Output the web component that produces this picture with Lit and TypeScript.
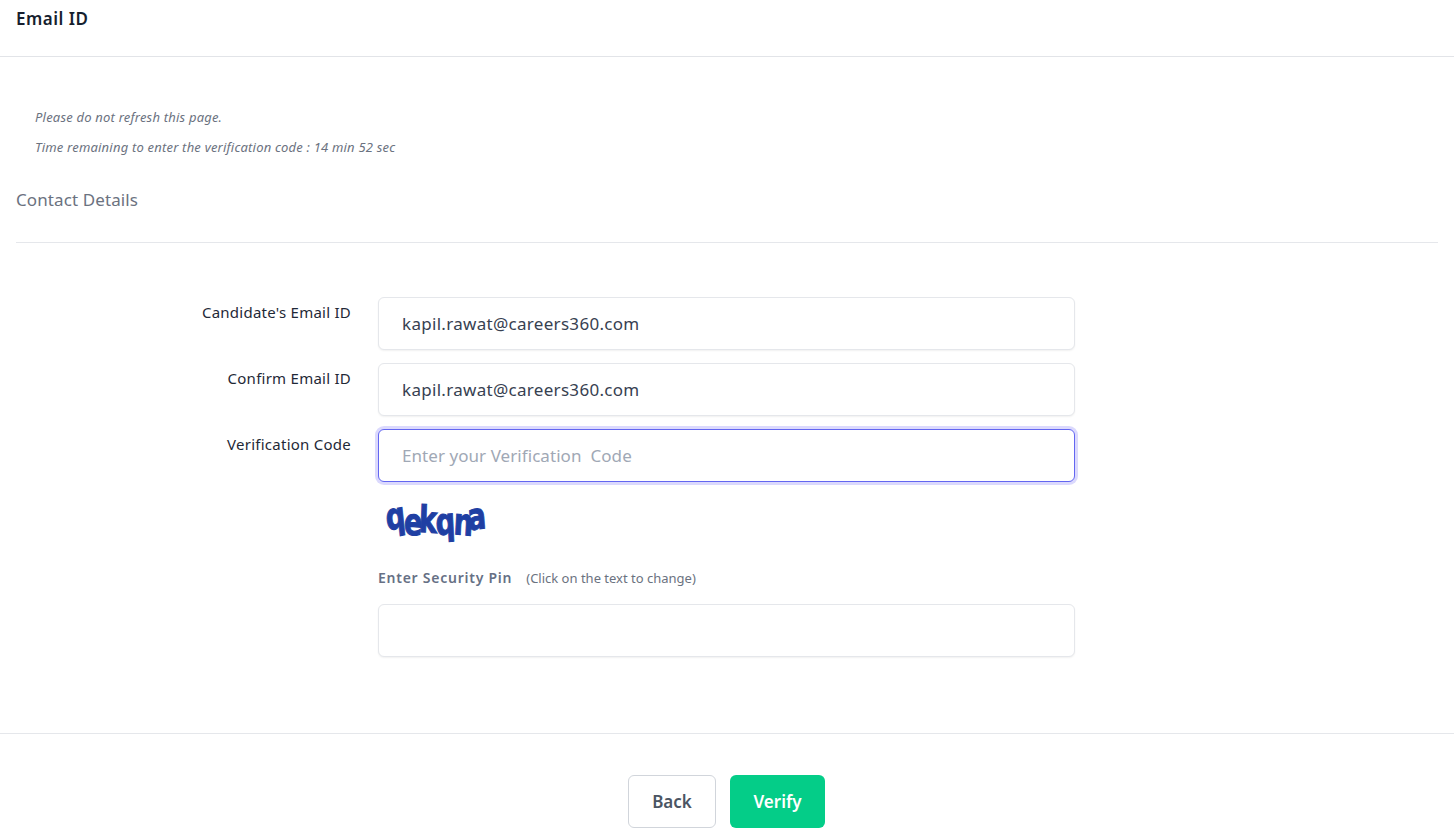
import { LitElement, html, css, svg } from "lit";
import { customElement } from "lit/decorators.js";

@customElement("app-root")
export class AppRoot extends LitElement {
  static styles = css`
    :host { display: block; height: 840px; overflow: hidden; background: #fff; font-family: "Noto Sans", "Open Sans", sans-serif; color: #1a202c; }
    * { box-sizing: border-box; }
    .head { height: 57px; padding: 9px 16px 0; border-bottom: 1px solid #e2e4e8; font-size: 17px; letter-spacing: .5px; line-height: 20px; font-weight: 600; color: #161e2e; }
    .notes { padding: 51px 35px 0; font-size: 13px; letter-spacing: .2px; font-style: italic; color: #6b7280; line-height: 18px; display: flex; flex-direction: column; gap: 12px; }
    .section { margin: 0 16px; height: 87px; padding-top: 32px; border-bottom: 1px solid #e5e7eb; font-size: 17px; letter-spacing: .1px; line-height: 24px; color: #6b7280; }
    .form { padding-top: 54px; display: grid; grid-template-columns: 351px 697px; column-gap: 27px; row-gap: 13px; }
    .label { text-align: right; font-size: 15px; letter-spacing: .25px; line-height: 20px; color: #1f2937; padding-top: 5px; }
    .input { height: 53px; border: 1px solid #e5e7eb; border-radius: 6px; box-shadow: 0 1px 2px rgba(0,0,0,.06); padding: 0 23px; display: flex; align-items: center; font-size: 17px; letter-spacing: .3px; color: #374151; background: #fff; }
    .focus { border-color: #6366f1; box-shadow: 0 0 0 3px rgba(165,160,250,.4); color: #a0a8b5; white-space: pre; letter-spacing: .06px; }
    .captcha-cell { grid-column: 2; margin-top: -13px; }
    .captcha { height: 86px; padding: 21px 0 0 9px; }
    .captcha svg { display: block; width: 104px; height: 44px; overflow: visible; }
    .captcha text { font-family: "DejaVu Sans", sans-serif; font-weight: 700; font-size: 32px; fill: #1f3fa3; stroke: #1f3fa3; stroke-width: 1px; transform: scale(.85, 1.15); }
    .pin-row { height: 36px; font-size: 13px; line-height: 20px; color: #6b7280; display: flex; gap: 14px; }
    .pin-row b { font-size: 14px; letter-spacing: .75px; font-weight: 600; color: #667085; }
    .foot { margin-top: 76px; border-top: 1px solid #e5e7eb; padding: 41px 1px 0 0; display: flex; justify-content: center; gap: 14px; }
    .btn { height: 53px; border-radius: 6px; display: flex; align-items: center; justify-content: center; font-size: 17px; font-weight: 600; }
    .back { width: 88px; border: 1px solid #d1d5db; color: #4b5563; background: #fff; }
    .verify { width: 95px; background: #04cd88; color: #fff; }
  `;

  render() {
    return html`
      <div class="head">Email ID</div>
      <div class="notes">
        <div>Please do not refresh this page.</div>
        <div>Time remaining to enter the verification code : 14 min 52 sec</div>
      </div>
      <div class="section">Contact Details</div>
      <div class="form">
        <div class="label">Candidate's Email ID</div>
        <div class="input">kapil.rawat@careers360.com</div>
        <div class="label">Confirm Email ID</div>
        <div class="input">kapil.rawat@careers360.com</div>
        <div class="label">Verification Code</div>
        <div class="input focus">Enter your Verification  Code</div>
        <div class="captcha-cell">
          <div class="captcha">
            <svg viewBox="0 0 104 44">
              ${svg`<text x="0 19.4 37 58 78 96" y="24 27 25 28 27 24" rotate="-8 4 3 -4 4 -6">qekqna</text>`}
            </svg>
          </div>
          <div class="pin-row"><b>Enter Security Pin</b><span>(Click on the text to change)</span></div>
          <div class="input"></div>
        </div>
      </div>
      <div class="foot">
        <div class="btn back">Back</div>
        <div class="btn verify">Verify</div>
      </div>
    `;
  }
}
